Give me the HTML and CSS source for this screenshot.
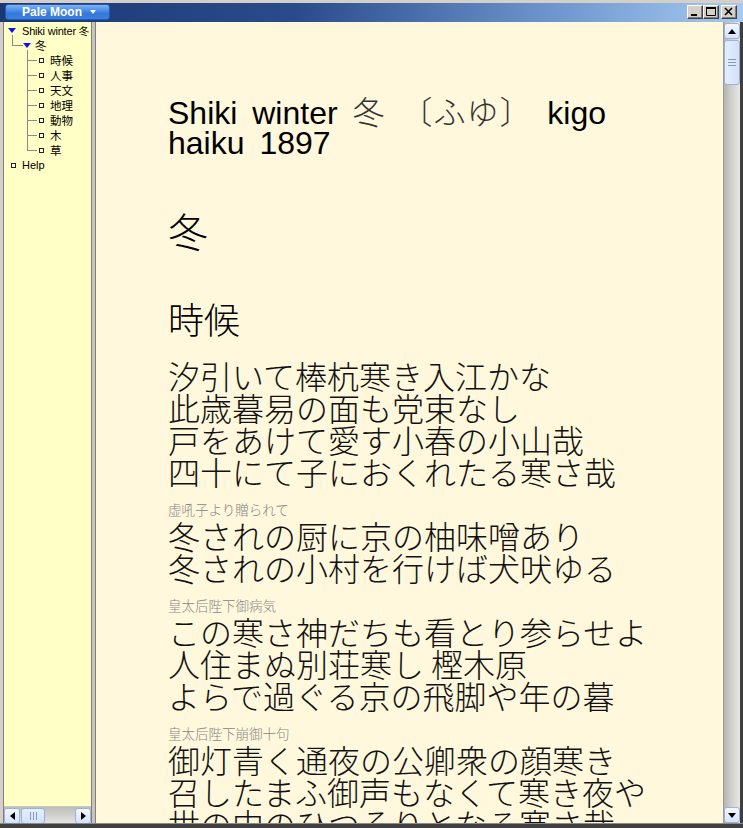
FILE: index.html
```html
<!DOCTYPE html>
<html lang="ja">
<head>
<meta charset="utf-8">
<title>Shiki winter 冬</title>
<link rel="stylesheet" href="styles.css">
</head>
<body>
<div class="window">
  <div class="titlebar">
    <div class="appmenu"><span class="appname">Pale Moon</span><span class="caret"></span></div>
    <div class="wincontrols">
      <span class="wbtn"><svg width="14" height="12" viewBox="0 0 14 12"><rect x="3" y="8" width="6" height="2" fill="#000"/></svg></span>
      <span class="wbtn"><svg width="14" height="12" viewBox="0 0 14 12"><path d="M2.5 1.5h9v8h-9z" fill="none" stroke="#000"/><rect x="2" y="1" width="10" height="2" fill="#000"/></svg></span>
      <span class="wbtn gap"><svg width="14" height="12" viewBox="0 0 14 12"><path d="M3 2l7 7M10 2l-7 7" stroke="#000" stroke-width="1.6" fill="none"/></svg></span>
    </div>
  </div>
  <div class="main">
    <div class="sidebar">
      <div class="tree">
        <div class="row lvl0"><span class="twisty"></span><span class="label">Shiki winter <span class="j">冬</span></span></div>
        <div class="row lvl1"><span class="conn1"></span><span class="twisty"></span><span class="label j">冬</span></div>
        <div class="row lvl2"><span class="conn2 first"></span><span class="leaf"></span><span class="label j">時候</span></div>
        <div class="row lvl2"><span class="conn2"></span><span class="leaf"></span><span class="label j">人事</span></div>
        <div class="row lvl2"><span class="conn2"></span><span class="leaf"></span><span class="label j">天文</span></div>
        <div class="row lvl2"><span class="conn2"></span><span class="leaf"></span><span class="label j">地理</span></div>
        <div class="row lvl2"><span class="conn2"></span><span class="leaf"></span><span class="label j">動物</span></div>
        <div class="row lvl2"><span class="conn2"></span><span class="leaf"></span><span class="label j">木</span></div>
        <div class="row lvl2"><span class="conn2 last"></span><span class="leaf"></span><span class="label j">草</span></div>
        <div class="row help"><span class="leaf"></span><span class="label">Help</span></div>
      </div>
      <div class="hscroll">
        <span class="sbtn"><span class="tri-left"></span></span>
        <span class="hthumb"><span class="vgrip"></span><span class="vgrip"></span><span class="vgrip"></span></span>
        <span class="strack"></span>
        <span class="sbtn"><span class="tri-right"></span></span>
      </div>
    </div>
    <div class="splitter"></div>
    <div class="content">
      <h1 class="doc-title">Shiki winter <span class="j">冬</span> <span class="j">〔ふゆ〕</span> kigo haiku 1897</h1>
      <h2 class="h-season">冬</h2>
      <h3 class="h-cat">時候</h3>
      <div class="verses">
        <div class="l">汐引いて棒杭寒き入江かな</div>
        <div class="l">此歳暮易の面も党束なし</div>
        <div class="l">戸をあけて愛す小春の小山哉</div>
        <div class="l">四十にて子におくれたる寒さ哉</div>
        <p class="note">虚吼子より贈られて</p>
        <div class="l">冬されの厨に京の柚味噌あり</div>
        <div class="l">冬されの小村を行けば犬吠ゆる</div>
        <p class="note">皇太后陛下御病気</p>
        <div class="l">この寒さ神だちも看とり参らせよ</div>
        <div class="l">人住まぬ別荘寒し 樫木原</div>
        <div class="l">よらで過ぐる京の飛脚や年の暮</div>
        <p class="note">皇太后陛下崩御十句</p>
        <div class="l">御灯青く通夜の公卿衆の顔寒き</div>
        <div class="l">召したまふ御声もなくて寒き夜や</div>
        <div class="l">世の中のひつそりとなる寒さ哉</div>
      </div>
    </div>
    <div class="vscroll">
      <span class="sbtn"><span class="tri-up"></span></span>
      <span class="vthumb"><span class="hgrip"></span><span class="hgrip"></span><span class="hgrip"></span></span>
      <span class="strack"></span>
      <span class="sbtn"><span class="tri-down"></span></span>
    </div>
  </div>
  <div class="bottomedge"></div>
</div>
</body>
</html>
```
FILE: styles.css
```css
* { box-sizing: border-box; }
html, body { margin: 0; padding: 0; }
body {
  width: 743px;
  height: 828px;
  overflow: hidden;
  background: #d4d0c8;
  font-family: "Liberation Sans", "Noto Sans CJK JP", sans-serif;
}
.window {
  width: 743px;
  height: 828px;
  display: flex;
  flex-direction: column;
  background: #d4d0c8;
  padding-top: 3px;
}
.j { font-family: "Noto Sans CJK JP", sans-serif; }

/* title bar */
.titlebar {
  height: 19px;
  flex: none;
  display: flex;
  align-items: flex-start;
  justify-content: space-between;
  background: linear-gradient(to right, #1c3873 0%, #2a4b8c 40%, #6f97cf 75%, #a6caf0 100%);
}
.appmenu {
  margin: 1px 0 0 5px;
  width: 105px;
  height: 16px;
  display: flex;
  align-items: center;
  padding-left: 16px;
  border-radius: 3px;
  border: 1px solid #2558b4;
  background: linear-gradient(to bottom, #7db3f5 0%, #4a8ee6 40%, #3479d9 60%, #3a80de 100%);
}
.appname {
  color: #fff;
  font: bold 12px/14px "Liberation Sans", sans-serif;
}
.caret {
  margin-left: 8px;
  width: 0;
  height: 0;
  border-left: 3.5px solid transparent;
  border-right: 3.5px solid transparent;
  border-top: 4px solid #fff;
}
.wincontrols {
  margin: 2px 6px 0 0;
  display: flex;
}
.wbtn {
  width: 16px;
  height: 14px;
  display: flex;
  align-items: center;
  justify-content: center;
  background: #d4d0c8;
  border: 1px solid;
  border-color: #fff #404040 #404040 #fff;
  box-shadow: inset -1px -1px #808080;
}
.wbtn.gap { margin-left: 2px; }

/* main area */
.main {
  height: 801px;
  flex: none;
  display: flex;
  padding-left: 3px;
  border-right: 3px solid #3e3e3e;
}
.sidebar {
  width: 88px;
  flex: none;
  display: flex;
  flex-direction: column;
  background: #ffffc6;
  border-left: 1px solid #808080;
  overflow: hidden;
}
.tree {
  flex: 1;
  padding-top: 1px;
  font-size: 11px;
  color: #000;
}
.row {
  height: 15px;
  display: flex;
  align-items: center;
  white-space: nowrap;
}
.row .label { line-height: 15px; }
.row .j { font-size: 11.5px; }
.lvl0 .label { letter-spacing: -0.2px; }
.lvl0 .j { font-size: 10.5px; }
.lvl0 { padding-left: 4px; }
.lvl1 { padding-left: 8px; }
.lvl2 { padding-left: 23px; }
.help { padding-left: 7px; }
.twisty {
  width: 0;
  height: 0;
  border-left: 4px solid transparent;
  border-right: 4px solid transparent;
  border-top: 5px solid #1010f0;
  margin-right: 6px;
}
.lvl1 .twisty { margin-right: 4px; }
.conn1 {
  align-self: flex-start;
  margin-top: -3px;
  width: 11px;
  height: 11px;
  border-left: 1px solid #8a8a8a;
  border-bottom: 1px solid #8a8a8a;
}
.conn2 {
  align-self: stretch;
  width: 10px;
  margin-right: 2px;
  background:
    linear-gradient(#8a8a8a, #8a8a8a) no-repeat 0 0 / 1px 100%,
    linear-gradient(#8a8a8a, #8a8a8a) no-repeat 0 7px / 100% 1px;
}
.conn2.first {
  align-self: flex-start;
  margin-top: -3px;
  height: 18px;
  background:
    linear-gradient(#8a8a8a, #8a8a8a) no-repeat 0 0 / 1px 100%,
    linear-gradient(#8a8a8a, #8a8a8a) no-repeat 0 10px / 100% 1px;
}
.conn2.last {
  background:
    linear-gradient(#8a8a8a, #8a8a8a) no-repeat 0 0 / 1px 8px,
    linear-gradient(#8a8a8a, #8a8a8a) no-repeat 0 7px / 100% 1px;
}
.leaf {
  width: 5px;
  height: 5px;
  border: 1px solid #202020;
  background: #fffff0;
  margin-right: 6px;
}

/* scrollbars */
.hscroll {
  height: 17px;
  flex: none;
  display: flex;
  padding: 1px 0 0 0;
  background: linear-gradient(to bottom, #bdbdb9, #e4e4e0);
  border-top: 1px solid #c8c8c4;
}
.vscroll {
  width: 17px;
  flex: none;
  display: flex;
  flex-direction: column;
  padding-top: 1px;
  background: linear-gradient(to right, #b4b4b0, #d2d2ce 50%, #e6e6e2);
  border-left: 1px solid #9a9a96;
}
.sbtn {
  flex: none;
  width: 16px;
  height: 16px;
  display: flex;
  align-items: center;
  justify-content: center;
  border: 1px solid #9fb2d6;
  border-radius: 3px;
  background: linear-gradient(to bottom, #f4f8ff, #d4e3fb);
}
.strack { flex: 1; }
.tri-up, .tri-down, .tri-left, .tri-right { width: 0; height: 0; }
.tri-up { border-left: 4px solid transparent; border-right: 4px solid transparent; border-bottom: 5px solid #000; }
.tri-down { border-left: 4px solid transparent; border-right: 4px solid transparent; border-top: 5px solid #000; }
.tri-left { border-top: 4px solid transparent; border-bottom: 4px solid transparent; border-right: 5px solid #000; }
.tri-right { border-top: 4px solid transparent; border-bottom: 4px solid transparent; border-left: 5px solid #000; }
.vthumb {
  flex: none;
  width: 16px;
  height: 45px;
  margin-top: 1px;
  display: flex;
  flex-direction: column;
  align-items: center;
  justify-content: center;
  gap: 2px;
  border: 1px solid #9fb2d6;
  border-radius: 3px;
  background: linear-gradient(to right, #e4eefd, #d2e2fb);
}
.hgrip { width: 8px; height: 1px; background: #8c9ab4; }
.hthumb {
  flex: none;
  width: 24px;
  height: 16px;
  margin-left: 1px;
  display: flex;
  align-items: center;
  justify-content: center;
  gap: 2px;
  border: 1px solid #9fb2d6;
  border-radius: 3px;
  background: linear-gradient(to bottom, #e4eefd, #d2e2fb);
}
.vgrip { width: 1px; height: 8px; background: #8c9ab4; }

.splitter {
  width: 5px;
  flex: none;
  background: #c6c4bc;
  border-left: 1px solid #808080;
  border-right: 1px solid #808080;
}

/* content */
.content {
  flex: 1;
  min-width: 0;
  overflow: hidden;
  background: #fff8dc;
  padding: 73px 0 0 72px;
  color: #000;
}
.doc-title {
  margin: 0;
  width: 500px;
  font-weight: 400;
  font-size: 32px;
  line-height: 30px;
  word-spacing: 6px;
}
.doc-title .j { font-weight: 300; color: #333; letter-spacing: 1px; }
.h-season {
  margin: 52px 0 0;
  font: 300 40px/40px "Noto Sans CJK JP", sans-serif;
}
.h-cat {
  margin: 50px 0 0;
  font: 300 36px/36px "Noto Sans CJK JP", sans-serif;
}
.verses { margin-top: 23px; }
.l {
  font: 300 32px/32px "Noto Sans CJK JP", sans-serif;
  white-space: nowrap;
  color: #111;
}
.note {
  margin: 0;
  padding: 16px 0 3px;
  font: 300 13.5px/13px "Noto Sans CJK JP", sans-serif;
  color: #858585;
  white-space: nowrap;
}

.bottomedge {
  height: 5px;
  flex: none;
  background: #404040;
  border-top: 1px solid #8a8a8a;
}
```
